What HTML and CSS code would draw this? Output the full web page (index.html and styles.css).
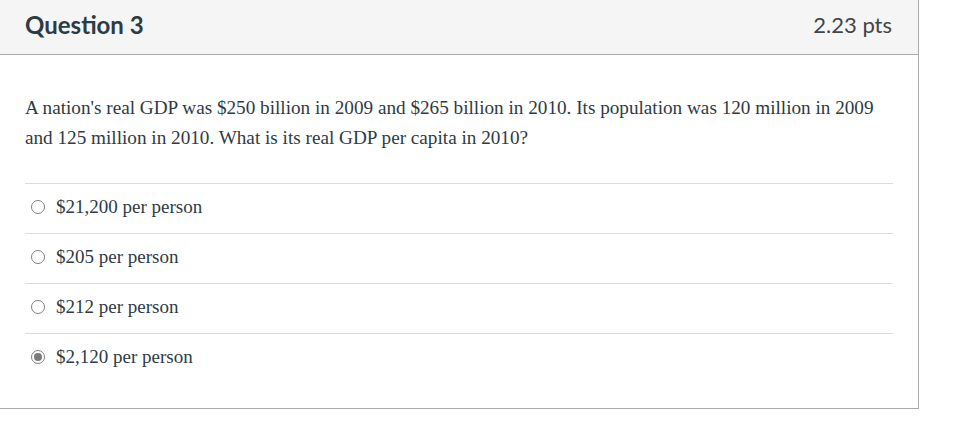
FILE: index.html
```html
<!DOCTYPE html>
<html>
<head>
<meta charset="utf-8">
<link rel="stylesheet" href="styles.css">
</head>
<body>
<div class="panel">
  <div class="header">
    <div class="title">Question 3</div>
    <div class="pts">2.23 pts</div>
  </div>
  <div class="content">
    <p class="question">A nation's real GDP was $250 billion in 2009 and $265 billion in 2010. Its population was 120 million in 2009 and 125 million in 2010. What is its real GDP per capita in 2010?</p>
    <div class="answers">
      <div class="answer"><span class="radio"></span><span class="label">$21,200 per person</span></div>
      <div class="answer"><span class="radio"></span><span class="label">$205 per person</span></div>
      <div class="answer"><span class="radio"></span><span class="label">$212 per person</span></div>
      <div class="answer last"><span class="radio checked"></span><span class="label">$2,120 per person</span></div>
    </div>
  </div>
</div>
</body>
</html>
```
FILE: styles.css
```css
html, body {
  margin: 0;
  padding: 0;
  background: #fff;
}
.panel {
  width: 918px;
  border-right: 1px solid #aaaaaa;
  border-bottom: 1px solid #aaaaaa;
}
.header {
  height: 55px;
  box-sizing: border-box;
  background: #f5f5f5;
  border-bottom: 1px solid #aaaaaa;
  display: flex;
  align-items: center;
  justify-content: space-between;
  padding: 0 26px 5px 25px;
  font-family: Lato, "Liberation Sans", sans-serif;
  color: #2d3b45;
}
.title {
  font-size: 24px;
  font-weight: 700;
}
.pts {
  font-size: 22px;
  color: #444;
}
.content {
  padding: 0 25px 25px 25px;
}
.question {
  margin: 0;
  padding: 38px 0 30px 0;
  font-family: "Liberation Serif", serif;
  font-size: 19.2px;
  line-height: 30px;
  color: #2d3b45;
}
.answers {
  border-top: 1px solid #dcdcdc;
}
.answer {
  height: 45px;
  padding: 0 0 4px 6px;
  border-bottom: 1px solid #dcdcdc;
  display: flex;
  align-items: center;
  font-family: "Liberation Serif", serif;
  font-size: 19px;
  color: #2d3b45;
}
.answer.last {
  border-bottom: none;
}
.radio {
  width: 12px;
  height: 12px;
  border: 1px solid #808080;
  border-radius: 50%;
  margin-right: 11px;
  display: flex;
  align-items: center;
  justify-content: center;
  flex: none;
}
.radio.checked::after {
  content: "";
  width: 8px;
  height: 8px;
  border-radius: 50%;
  background: #7a7a7a;
}
```
